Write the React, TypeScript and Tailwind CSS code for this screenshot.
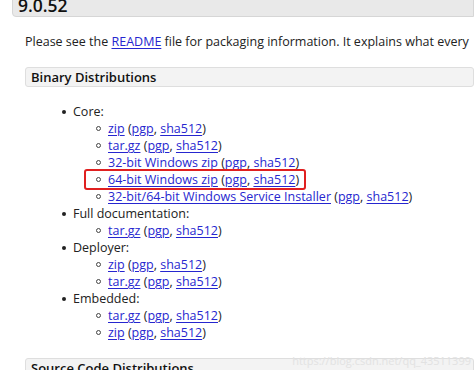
const L = ({ children }: { children: React.ReactNode }) => (
  <a className="text-[#2626cf] underline underline-offset-2 decoration-1">{children}</a>
);

type Row = { name: string; boxed?: boolean };

const Sums = () => (
  <>
    {" "}(<L>pgp</L>, <L>sha512</L>)
  </>
);

const groups: { title: string; items: Row[] }[] = [
  {
    title: "Core:",
    items: [
      { name: "zip" },
      { name: "tar.gz" },
      { name: "32-bit Windows zip" },
      { name: "64-bit Windows zip", boxed: true },
      { name: "32-bit/64-bit Windows Service Installer" },
    ],
  },
  { title: "Full documentation:", items: [{ name: "tar.gz" }] },
  { title: "Deployer:", items: [{ name: "zip" }, { name: "tar.gz" }] },
  { title: "Embedded:", items: [{ name: "tar.gz" }, { name: "zip" }] },
];

export default function App() {
  return (
    <div
      className="w-[474px] h-[370px] overflow-hidden bg-white text-[#222] text-[12.5px] leading-[17px]"
      style={{ fontFamily: '"Open Sans", "Noto Sans", sans-serif' }}
    >
      <div className="ml-3 -mt-2 h-[25px] bg-[#e9e9e9] border border-[#d6d6d6] rounded-bl-[4px] flex items-end pl-[5px] pb-[1px]">
        <span className="text-[17.5px] leading-[20px] font-semibold text-[#111]">9.0.52</span>
      </div>

      <p className="ml-[25px] mt-[16px] whitespace-nowrap">
        Please see the <L>README</L> file for packaging information. It explains what every
      </p>

      <div className="ml-[25px] mt-[17px] h-[20px] bg-[#f3f3f3] border border-[#dedede] rounded-[3px] pl-[5px] flex items-center">
        <span className="font-semibold text-[#111] text-[13px]">Binary Distributions</span>
      </div>

      <ul className="mt-[16px] ml-[62px]">
        {groups.map((g) => (
          <li key={g.title}>
            <div className="flex items-center">
              <span className="w-[4px] h-[4px] rounded-full bg-[#222] mr-[7px]" />
              {g.title}
            </div>
            <ul className="ml-[34px]">
              {g.items.map((it, i) => (
                <li
                  key={i}
                  className={
                    it.boxed
                      ? "flex items-center whitespace-nowrap w-fit -ml-[10px] pl-[10px] pr-[5px] outline-2 outline-[#e02020] rounded-[1px]"
                      : "flex items-center whitespace-nowrap"
                  }
                >
                  <span className="w-[5px] h-[5px] rounded-full border border-[#444] mr-[7px]" />
                  <L>{it.name}</L>
                  <span className="whitespace-pre">
                    <Sums />
                  </span>
                </li>
              ))}
            </ul>
          </li>
        ))}
      </ul>

      <div className="relative ml-[25px] mt-[17px] h-[20px] bg-[#f3f3f3] border border-[#dedede] rounded-[3px] pl-[5px] flex items-center">
        <span className="font-semibold text-[#111] text-[13px]">Source Code Distributions</span>
        <span className="absolute right-[2px] top-[-7px] text-[11px] text-[#e2e2e2]">https://blog.csdn.net/qq_43511399</span>
      </div>
    </div>
  );
}
